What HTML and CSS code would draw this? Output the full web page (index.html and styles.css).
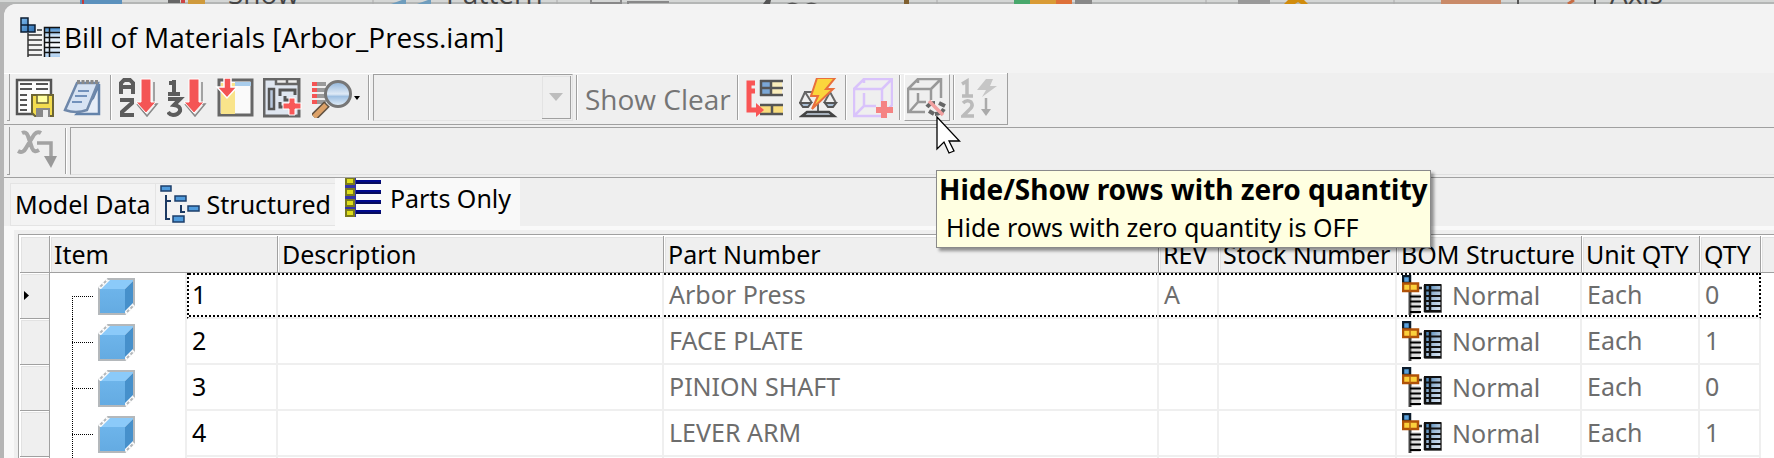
FILE: index.html
```
<!DOCTYPE html>
<html lang="en">
<head>
<meta charset="utf-8">
<title>Bill of Materials</title>
<link rel="stylesheet" href="styles.css">
</head>
<body>
<svg class="defs" aria-hidden="true">
  <defs>
    <linearGradient id="gBlue" x1="0" y1="0" x2="1" y2="1"><stop offset="0" stop-color="#7db8ea"/><stop offset="1" stop-color="#2b6db0"/></linearGradient>
    <linearGradient id="gSheet" x1="0" y1="0" x2="1" y2="1"><stop offset="0" stop-color="#2f74ae"/><stop offset=".45" stop-color="#9fbbd6"/><stop offset="1" stop-color="#dfe9f5"/></linearGradient>
    <linearGradient id="gHead" x1="0" y1="0" x2="0" y2="1"><stop offset="0" stop-color="#2d7cc4"/><stop offset=".3" stop-color="#d5e8f8"/><stop offset=".6" stop-color="#fff"/><stop offset="1" stop-color="#a9cdf0"/></linearGradient>
    <linearGradient id="gLens" x1="0" y1="0" x2="0" y2="1"><stop offset="0" stop-color="#8fb4da"/><stop offset=".5" stop-color="#dfeaf6"/><stop offset=".6" stop-color="#9fc0e2"/><stop offset="1" stop-color="#e8f2fb"/></linearGradient>
    <linearGradient id="gFront" x1="0" y1="0" x2="0" y2="1"><stop offset="0" stop-color="#6db4ea"/><stop offset="1" stop-color="#64abe2"/></linearGradient>
    <symbol id="cube" viewBox="0 0 37 37">
      <path d="M1 36V10L10 1H36V27L27 36Z" fill="#fff" stroke="#b4b8bb" stroke-width="2"/>
      <path d="M1 10 10 1M36 27 27 36" stroke="#fff" stroke-width="2" stroke-dasharray="2 3"/>
      <path d="M2 12 12 2H35V3L27 11H2Z" fill="#8bcaf9"/>
      <path d="M2 11H27V35H2Z" fill="url(#gFront)"/>
      <path d="M27 11 35 3V25L27 33Z" fill="#4690cb"/>
    </symbol>
    <symbol id="normal" viewBox="0 0 40 40">
      <rect x="10" y="19" width="8" height="20" fill="#ddd"/>
      <path d="M8 16V40" stroke="#444" stroke-width="3"/><path d="M8 21.500H19M8 26.500H19M8 31.500H19M8 37H19" fill="none" stroke="#000" stroke-width="2"/>
      <rect x="1" y="1" width="7" height="7" fill="#5aa0dc" stroke="#0d1c2b" stroke-width="2.500"/>
      <rect x="1" y="8.500" width="15" height="7.500" fill="#fbd03c" stroke="#b05208" stroke-width="2.500"/>
      <path d="M8 9V16" stroke="#b86412" stroke-width="1.500"/><path d="M17 13H20" stroke="#333" stroke-width="2.500"/>
      <rect x="23" y="10" width="16" height="27" fill="url(#gSheet)" stroke="#333" stroke-width="1.500"/>
      <path d="M22 10H39M22 15.500H39M22 21H39M22 26H39M22 31H39M22 36H39" stroke="#111" stroke-width="2"/><path d="M28 10V37M23 10V37" stroke="#111" stroke-width="2.500"/>
    </symbol>
  </defs>
</svg>

<div class="host" aria-hidden="true">
  <svg class="host-strip" width="1774" height="4" viewBox="0 0 1774 4">
    <rect x="80" width="42" height="4" fill="#5b91bd"/><path d="M83 0V4" stroke="#c43c3c" stroke-width="2"/>
    <rect x="168" width="12" height="3" fill="#666"/><rect x="181" width="4" height="3" fill="#c44"/><rect x="188" width="17" height="4" fill="#cf9a3c"/>
    <path d="M373 0V4M557 0V4M937 0V4M1048 0V4M1206 0V4M1394 0V4" stroke="#aaa"/>
    <path d="M391 4 402 0H406V4ZM417 4 428 0H431V4Z" fill="#6f9dbd"/>
    <path d="M591 0V3H621V0M628 4V2H669" stroke="#888" stroke-width="2" fill="none"/>
    <path d="M763 4 766 0H771L770 4ZM787 4Q792 1 798 4ZM806 4Q811 1 817 4Z" fill="#555"/>
    <rect x="904" width="5" height="4" fill="#806030"/>
    <rect x="1014" width="16" height="4" fill="#48a86c"/><rect x="1030" width="26" height="4" fill="#d99b35"/><rect x="1056" width="16" height="4" fill="#de7038"/><rect x="1075" width="17" height="4" fill="#888"/>
    <rect x="1238" width="32" height="4" fill="#999"/><path d="M1284 4 1288 0H1304L1308 4H1301L1298 2 1295 4Z" fill="#d18c0c"/>
    <rect x="1441" width="60" height="4" fill="#c98a68"/><path d="M1518 0V4M1595 0V4" stroke="#555" stroke-width="2"/><path d="M1568 4 1574 0" stroke="#c76d45" stroke-width="3"/>
  </svg>
  <span class="host-label host-show">Show</span>
  <span class="host-label host-pattern">Pattern</span>
  <span class="host-label host-axis">Axis</span>
</div>

<main class="window">
  <header class="title">
    <svg width="40" height="40" viewBox="0 0 40 40" aria-hidden="true">
      <path d="M8 16V40M8 18H22M8 23H22M8 28H22M8 33H22M8 38H22M17 13H22" fill="none" stroke="#333" stroke-width="1.5"/>
      <path d="M1 1H8V8H15V15H1Z" fill="url(#gBlue)" stroke="#0c1e33" stroke-width="1.5"/><path d="M1 8H8V15" fill="none" stroke="#0c1e33" stroke-width="1.5"/>
      <rect x="24" y="10" width="16" height="30" fill="url(#gHead)"/>
      <path d="M24.500 40V10.500H40M24 15.500H40M24 20.500H40M24 25.500H40M24 30.500H40M24 35.500H40M29.500 10V40" fill="none" stroke="#111" stroke-width="1.500"/>
    </svg>
    <h1>Bill of Materials [Arbor_Press.iam]</h1>
  </header>

  <div class="toolbar" role="toolbar" aria-label="Bill of materials tools">
    <i class="grip"></i>
    <div class="group">
      <button class="tool" aria-label="Export bill of materials"><svg viewBox="0 0 40 40">
        <path d="M2 2H36V36H2Z" fill="#fcfcfc" stroke="#555" stroke-width="2.500"/>
        <path d="M5 6H17M21 6H33M5 11H17M21 11H33M5 17H12M5 22H12M5 27H12M5 32H12" stroke="#555" stroke-width="2.200"/>
        <path d="M17 17H38V38H20L17 35Z" fill="#f3dc4f" stroke="#6b6436" stroke-width="2"/><rect x="22" y="17" width="11" height="8" fill="#ffffa0" stroke="#6b6436" stroke-width="1.500"/><rect x="21" y="30" width="14" height="9" fill="#888"/><rect x="28" y="32" width="5" height="7" fill="#eee"/>
      </svg></button>
      <button class="tool" aria-label="Engineer's notebook"><svg viewBox="0 0 40 40">
        <path d="M14 36H36V6L30 20Z" fill="#e6edf7" stroke="#6483aa" stroke-width="2.500"/>
        <path d="M2 32 14 5H35L24 32Q13 36 2 32Z" fill="#d7e3f3" stroke="#6f88aa" stroke-width="2.500"/>
        <path d="M14 4H36" stroke="#8a8a8a" stroke-width="4" stroke-dasharray="3 1.500"/>
        <path d="M15 13H26M12 18H24M9 24H19" stroke="#7291bb" stroke-width="2.200"/>
      </svg></button>
    </div>
    <i class="sep"></i>
    <div class="group">
      <button class="tool" aria-label="Sort"><svg viewBox="0 0 40 40">
        <path d="M2 16V5L5 2H11L14 5V16M2 9H14M1 22H13V25L3 34V37H15" fill="none" stroke="#5c5c5c" stroke-width="4"/>
        <path d="M35 4V26H38L28 38 18 26" fill="none" stroke="#888" stroke-width="1.500"/>
        <path d="M22 1H32V24H37L27 35 17 24H22Z" fill="#f45555" stroke="#fff"/>
      </svg></button>
      <button class="tool" aria-label="Renumber items"><svg viewBox="0 0 40 40">
        <path d="M2 5H7V16M1 16H13M7 2V16M1 21H13L7 27Q14 28 13 33 11 37 6 37 3 37 1 34" fill="none" stroke="#5c5c5c" stroke-width="4"/>
        <path d="M35 4V26H38L28 38 18 26" fill="none" stroke="#888" stroke-width="1.500"/>
        <path d="M22 1H32V24H37L27 35 17 24H22Z" fill="#f45555" stroke="#fff"/>
      </svg></button>
      <button class="tool" aria-label="Add columns"><svg viewBox="0 0 40 40">
        <path d="M4 2H37V37H4Z" fill="#fafafa" stroke="#666" stroke-width="3"/><rect x="20" y="4" width="16" height="4" fill="#a9cdec"/><rect x="6" y="5" width="14" height="31" fill="#f9e48b"/>
        <path d="M9 0H16V9H22L12 20 2 9H9Z" fill="#f45555" stroke="#fff" stroke-width="1.500"/>
      </svg></button>
      <button class="tool" aria-label="Add custom column"><svg viewBox="0 0 40 40">
        <path d="M1 1H36V38H1Z" fill="#dfe6f0" stroke="#666" stroke-width="3"/><path d="M13 1H35V6H13ZM24 1V6" fill="#eee" stroke="#666" stroke-width="2.500"/>
        <rect x="6" y="11" width="5" height="20" fill="#b9c9df" stroke="#555" stroke-width="2.500"/><path d="M17 18V12H32V17M22 18V22H28M17 24V29H24" fill="none" stroke="#555" stroke-width="3"/>
        <path d="M26 20H32V25H38V31H32V37H26V31H20V25H26Z" fill="#f95858" stroke="#fff"/>
      </svg></button>
      <button class="tool wide" aria-label="Find"><svg viewBox="0 0 40 40">
        <path d="M0 6H14M0 12H14M0 18H14M0 24H14" stroke="#9a9a9a" stroke-width="4"/><path d="M0 6H5M0 12H5M0 18H5M0 24H5" stroke="#f45555" stroke-width="4"/>
        <path d="M15 26 2 39" stroke="#5f5040" stroke-width="8"/><path d="M14 27 2 39" stroke="#dca168" stroke-width="5"/>
        <circle cx="26" cy="16" r="12.500" fill="url(#gLens)" stroke="#777" stroke-width="3"/>
      </svg><svg class="tick" viewBox="0 0 6 4"><path d="M0 0H6L3 4Z"/></svg></button>
    </div>
    <i class="sep"></i>
    <label class="combo"><select disabled aria-label="View filter"><option></option></select><span class="drop"><svg width="14" height="8" viewBox="0 0 14 8"><path d="M0 0H14L7 8Z" fill="#bdbdbd"/></svg></span></label>
    <i class="sep"></i>
    <button class="clear" disabled>Show Clear</button>
    <i class="sep"></i>
    <button class="tool" aria-label="Part merge settings"><svg viewBox="0 0 40 40">
      <path d="M16 3H37V17H16Z" fill="#faedbb"/><path d="M16 3H25V17H16Z" fill="#7ba7d6"/><path d="M15 3H38M15 10H38M15 17H38M16 2V18M26 2V18" stroke="#555" stroke-width="2.500"/><path d="M15 27H38V35H15Z" fill="#f8dc7c"/><path d="M15 27H38M15 36H38M27 27V36" stroke="#555" stroke-width="2.500"/>
      <path d="M10 5H4V32H14M4 13H10" fill="none" stroke="#f95555" stroke-width="5"/><path d="M11 25 19 32 11 39Z" fill="#f95555"/>
    </svg></button>
    <i class="sep"></i>
    <button class="tool" aria-label="Update mass properties"><svg viewBox="0 0 40 40">
      <path d="M5 14H32M19 14V34M6 14 1 25M6 14 13 25M31 14 25 25M31 14 37 25" stroke="#666" stroke-width="2" fill="none"/>
      <path d="M1 25H12L9 29H4ZM26 25H37L34 29H29Z" fill="#a8bdd3" stroke="#555" stroke-width="2"/><path d="M3 38 8 34H30L35 38Z" fill="#c7d5e5" stroke="#444" stroke-width="2.500"/>
      <path d="M18 0H36L27 11H34L13 31 19 18H12Z" fill="#fbd53c" stroke="#e8703d" stroke-width="2"/>
    </svg></button>
    <i class="sep"></i>
    <button class="tool" aria-label="Create virtual component"><svg viewBox="0 0 40 40">
      <path d="M1 11H29V38H1ZM1 11 11 1H39V27L29 38M29 11 39 1M11 15V28L2 37M11 28H23M11 1V5" fill="none" stroke="#d9c3fb" stroke-width="2.500"/>
      <path d="M28 23H34V29H40V35H34V40H28V35H23V29H28Z" fill="#f58383"/>
    </svg></button>
    <i class="sep"></i>
    <button class="tool pressed" aria-label="Hide/Show rows with zero quantity" aria-describedby="tip"><svg viewBox="0 0 40 40">
      <path d="M18 34H1V11H24V22M1 11 11 1H34V20M24 11 34 1M11 15V24L3 33M11 24H19M11 1V5" fill="none" stroke="#999" stroke-width="2.500"/>
      <path d="M20 29Q23 25 28 25M28 36Q34 36 37 31M32 25 38 28M22 33 27 36" fill="none" stroke="#666" stroke-width="4"/><path d="M22 23 36 37" stroke="#f2a0a0" stroke-width="3.500"/>
    </svg></button>
    <i class="sep"></i>
    <button class="tool faded" disabled aria-label="Renumber automatically"><svg viewBox="0 0 40 40">
      <path d="M1 6 6 3V18M1 18H12M2 25Q6 21 10 24 13 28 8 32L2 38H13" fill="none" stroke="#bbb" stroke-width="3.500"/><path d="M25 1H32L29 8H36L21 19 25 12H16Z" fill="#c6c6c6"/><path d="M25 20V32" stroke="#aaa" stroke-width="2.500"/><path d="M20 31H30L25 38Z" fill="#aaa"/>
    </svg></button>
  </div>

  <div class="formula">
    <i class="grip"></i>
    <button class="tool" disabled aria-label="Accept expression"><svg viewBox="0 0 40 40">
      <path d="M5 3Q9 1 11 6L15 18Q17 23 22 20M24 3Q19 0 15 8L9 18Q6 24 1 21" fill="none" stroke="#a6a6a6" stroke-width="4"/><path d="M20 13H34V28" fill="none" stroke="#a2a2a2" stroke-width="3.500"/><path d="M27 26H40L34 38Z" fill="#999"/>
    </svg></button>
    <i class="sep"></i>
    <input type="text" disabled aria-label="Expression">
  </div>

  <nav class="tabs" role="tablist">
    <button class="tab" role="tab">Model Data</button>
    <button class="tab" role="tab"><svg width="40" height="38" viewBox="0 0 40 38" aria-hidden="true">
      <path d="M6 10V34H10M6 16H11M21 20V27H25" fill="none" stroke="#1c3a63" stroke-width="2"/>
      <g fill="#4f9bdc" stroke="#1d3f6b" stroke-width="1.500"><path d="M1 1H11V6H1ZM15 11H26V16H15ZM28 21H39V26H28ZM13 31H24V37H13Z"/></g>
    </svg>Structured</button>
    <button class="tab active" role="tab" aria-selected="true"><svg width="38" height="40" viewBox="0 0 38 40" aria-hidden="true">
      <path d="M11 4H37M11 14H37M11 24H37M11 34H37" stroke="#000a8c" stroke-width="4"/><path d="M11 5H37M11 15H37M11 25H37M11 35H37" stroke="#101030" stroke-width="1"/>
      <rect x="1" width="11" height="39" fill="#3434a8"/><g fill="#dede1c" stroke="#7a7a1c" stroke-width="2"><path d="M2 0H10V6H2ZM2 11H10V17H2ZM2 22H10V28H2ZM2 32H10V38H2Z"/></g>
    </svg>Parts Only</button>
  </nav>

  <section class="pane">
    <table class="grid">
      <colgroup><col class="c-mark"><col class="c-tree"><col class="c-item"><col class="c-desc"><col class="c-part"><col class="c-rev"><col class="c-stock"><col class="c-bom"><col class="c-unit"><col class="c-qty"><col></colgroup>
      <thead><tr><th></th><th colspan="2">Item</th><th>Description</th><th>Part Number</th><th>REV</th><th>Stock Number</th><th>BOM Structure</th><th>Unit QTY</th><th>QTY</th><th class="rest"></th></tr></thead>
      <tbody>
        <tr class="current"><th><svg width="5" height="9" viewBox="0 0 5 9" aria-hidden="true"><path d="M0 0 5 4.500 0 9Z"/></svg></th><td class="tree"><svg width="37" height="37"><use href="#cube"/></svg></td><td class="item">1</td><td></td><td>Arbor Press</td><td>A</td><td></td><td class="bom"><span><svg width="40" height="40"><use href="#normal"/></svg>Normal</span></td><td>Each</td><td>0</td><td class="rest"></td></tr>
        <tr><th></th><td class="tree"><svg width="37" height="37"><use href="#cube"/></svg></td><td class="item">2</td><td></td><td>FACE PLATE</td><td></td><td></td><td class="bom"><span><svg width="40" height="40"><use href="#normal"/></svg>Normal</span></td><td>Each</td><td>1</td><td class="rest"></td></tr>
        <tr><th></th><td class="tree"><svg width="37" height="37"><use href="#cube"/></svg></td><td class="item">3</td><td></td><td>PINION SHAFT</td><td></td><td></td><td class="bom"><span><svg width="40" height="40"><use href="#normal"/></svg>Normal</span></td><td>Each</td><td>0</td><td class="rest"></td></tr>
        <tr><th></th><td class="tree"><svg width="37" height="37"><use href="#cube"/></svg></td><td class="item">4</td><td></td><td>LEVER ARM</td><td></td><td></td><td class="bom"><span><svg width="40" height="40"><use href="#normal"/></svg>Normal</span></td><td>Each</td><td>1</td><td class="rest"></td></tr>
        <tr><th></th><td class="tree"></td><td class="item"></td><td></td><td></td><td></td><td></td><td class="bom"></td><td></td><td></td><td class="rest"></td></tr>
      </tbody>
    </table>
  </section>
</main>

<div class="tip" id="tip" role="tooltip"><b>Hide/Show rows with zero quantity</b><span>Hide rows with zero quantity is OFF</span></div>
<svg class="cursor" width="25" height="39" viewBox="0 0 25 39" aria-hidden="true"><path d="M1 1V33L8 26 13 37 18 35 13 25H23.500Z" fill="#fff" stroke="#000" stroke-width="1.300"/></svg>
</body>
</html>
```
FILE: styles.css
```
* { box-sizing: border-box; }
html, body { height: 100%; }
body {
  margin: 0;
  display: flex;
  flex-direction: column;
  position: relative;
  overflow: hidden;
  background: #b5b5b5;
  color: #000;
  font: 25px/32px "Noto Sans", "DejaVu Sans", sans-serif;
}
button, input, select { font: inherit; color: inherit; margin: 0; }
svg { display: block; flex: none; }
.defs { position: absolute; width: 0; height: 0; }

/* Ribbon of the application behind the dialog */
.host {
  position: relative;
  flex: none;
  height: 4px;
  overflow: hidden;
  background: linear-gradient(#d4d6d5 0 2px, #b4b6b5 2px);
}
.host-label { position: absolute; top: -22px; font: 28px/30px "Open Sans", sans-serif; color: #444; }
.host-show { left: 228px; }
.host-pattern { left: 446px; }
.host-axis { left: 1610px; }

.window {
  flex: 1;
  min-height: 0;
  margin-left: 4px;
  display: flex;
  flex-direction: column;
  overflow: hidden;
  border-top-left-radius: 12px;
  background: #efefef;
}
.title {
  flex: none;
  display: flex;
  align-items: center;
  gap: 4px;
  height: 69px;
  padding: 0 16px 4px;
  background: #f3f3f3;
}
.title h1 { margin: 0; font: 28px/40px "Open Sans", sans-serif; }

/* Toolbars */
.toolbar, .formula { display: flex; align-items: stretch; flex: none; }
.toolbar {
  align-self: flex-start;
  height: 52px;
  padding: 1px 3px 3px 3px;
  border: solid #a0a0a0;
  border-width: 0 1px 1px 0;
  box-shadow: inset 0 1px #fff;
}
.formula { height: 53px; padding: 2px 0 2px 3px; border-bottom: 1px solid #a0a0a0; }
.formula .tool svg { margin-bottom: 3px; }
.grip { width: 3px; flex: none; border: solid #a0a0a0; border-width: 0 1px 1px 0; margin-right: 1px; }
.sep { width: 2px; flex: none; margin: 1px 3px; border-left: 1px solid #a0a0a0; background: #fff; }
.group { display: flex; }
.tool {
  display: flex;
  align-items: center;
  justify-content: center;
  width: 48px;
  padding: 0;
  border: 0;
  background: none;
}
.tool svg { width: 40px; height: 40px; }
.tool.wide { width: 58px; gap: 2px; }
.tool .tick { width: 6px; height: 4px; }
.toolbar > .tool { width: 46px; }
.toolbar > .pressed { border: 1px solid #a0a0a0; border-top-color: #fff; border-left-color: #fff; }
.combo {
  display: flex;
  width: 200px;
  padding: 1px;
  border: 1px solid #a0a0a0;
  border-right-color: #e3e3e3;
  border-bottom-color: #e3e3e3;
}
.combo select { flex: 1; min-width: 0; appearance: none; border: 0; background: none; }
.drop {
  display: grid;
  place-items: center;
  width: 29px;
  border: solid #a0a0a0;
  border-width: 0 1px 1px 0;
  box-shadow: inset 1px 1px #e3e3e3;
}
.clear { padding: 2px 3px 0 4px; border: 0; background: none; color: #757575; font: 28px/40px "Open Sans", sans-serif; }
.formula .tool { width: 51px; }
.formula input {
  flex: 1;
  min-width: 0;
  padding: 0 8px;
  border: 1px solid #a0a0a0;
  border-width: 1px 0 1px 1px;
  border-bottom-color: #e0e0e0;
  background: #efefef;
}

/* Tabs */
.tabs { display: flex; align-items: flex-end; flex: none; height: 48px; padding-left: 6px; }
.tab {
  display: flex;
  align-items: center;
  gap: 7px;
  height: 43px;
  padding: 0 4px 2px;
  border: 1px solid #e4e4e4;
  border-right: 0;
  background: #f3f3f3;
  white-space: nowrap;
}
.tab.active {
  align-items: flex-start;
  gap: 8px;
  height: 48px;
  padding: 0 9px;
  border-width: 0 1px 0 0;
  background: #f9f9f9;
  line-height: 40px;
}

/* Grid */
.pane { flex: 1; min-height: 0; padding: 4px 0 0 10px; background: #f9f9f9; overflow: hidden; }
.grid {
  width: 100%;
  table-layout: fixed;
  border-collapse: separate;
  border-spacing: 0;
  border-top: 4px solid #efefef;
  border-left: 4px solid #efefef;
  background: #fff;
  box-shadow: inset 1px 1px #a0a0a0;
  padding: 2px 0 0 2px;
}
.c-mark { width: 30px; }
.c-tree { width: 137px; }
.c-item { width: 91px; }
.c-desc { width: 386px; }
.c-part { width: 495px; }
.c-rev { width: 60px; }
.c-stock { width: 178px; }
.c-bom { width: 185px; }
.c-unit { width: 118px; }
.c-qty { width: 61px; }
.grid th {
  height: 37px;
  padding: 0 0 0 4px;
  border: solid #a0a0a0;
  border-width: 0 1px 1px 0;
  background: #efefef;
  box-shadow: inset 1px 1px #fff, inset 2px 2px #e2e2e2;
  font-weight: normal;
  text-align: left;
  white-space: nowrap;
}
.grid th.rest { border-right: 0; }
.grid td {
  height: 46px;
  padding: 0 0 2px 5px;
  border: solid #efefef;
  border-width: 0 2px 2px 0;
  color: #6d6d6d;
  white-space: nowrap;
}
.grid tbody tr { height: 46px; }
.grid td.item { padding-left: 5px; color: #000; }
.grid td.tree {
  padding: 0 0 0 48px;
  border-bottom: 0;
  background:
    repeating-linear-gradient(90deg, #000 0 1px, transparent 1px 2px) 22px 23px / 22px 1px no-repeat,
    repeating-linear-gradient(#000 0 1px, transparent 1px 2px) 22px 0 / 1px 100% no-repeat;
}
.grid .current td.tree {
  background:
    repeating-linear-gradient(90deg, #000 0 1px, transparent 1px 2px) 22px 23px / 22px 1px no-repeat,
    repeating-linear-gradient(#000 0 1px, transparent 1px 2px) 22px 23px / 1px 23px no-repeat;
}
.grid td.rest { border: 0; }
.grid td.bom { padding: 0 0 0 5px; }
.bom span { display: flex; align-items: center; gap: 10px; }

/* Focus rectangle around the current row */
.grid .current td:not(.tree, .rest) {
  background:
    repeating-linear-gradient(90deg, #000 0 2px, transparent 2px 4px) 0 0 / 100% 2px repeat-x,
    repeating-linear-gradient(90deg, #000 0 2px, transparent 2px 4px) 0 100% / 100% 2px repeat-x;
  background-clip: padding-box;
}
.grid .current td.item { border-left: 2px dotted #000; padding-left: 3px; }
.grid .current td:nth-child(10) { border-right: 2px dotted #000; }

/* Tooltip and pointer */
.tip {
  position: absolute;
  left: 936px;
  top: 170px;
  padding: 0 2px;
  display: flex;
  flex-direction: column;
  border: 1px solid #8a8a8a;
  background: #ffffe1;
  box-shadow: 3px 3px 3px #0006;
  white-space: nowrap;
}
.tip b { font-size: 28px; line-height: 36px; }
.tip span { padding-left: 7px; line-height: 40px; }
.cursor { position: absolute; left: 936px; top: 116px; }
```
